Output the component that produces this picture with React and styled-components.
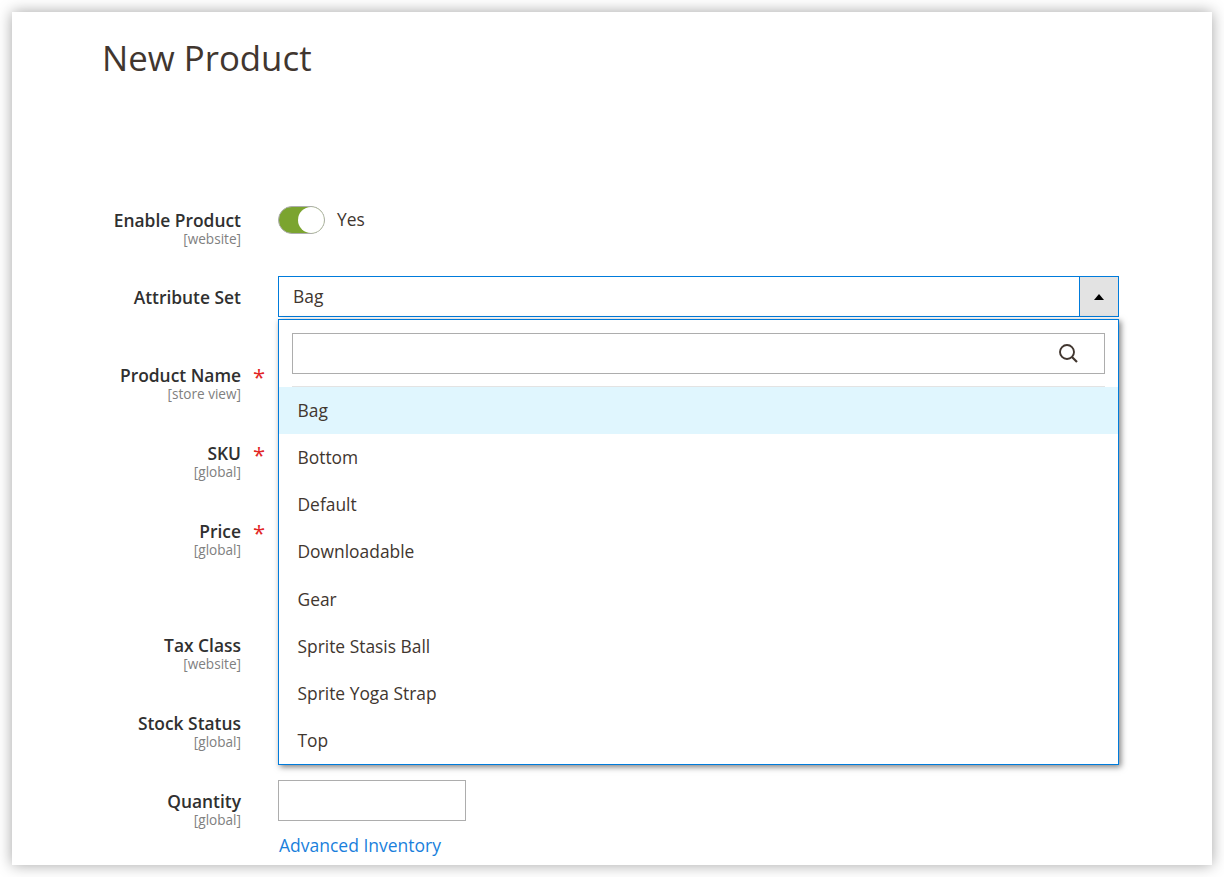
import React from 'react'
import styled, { createGlobalStyle } from 'styled-components'

const GlobalStyle = createGlobalStyle`
  html, body {
    margin: 0;
    padding: 0;
    background: #fff;
    font-family: 'Open Sans', 'Liberation Sans', sans-serif;
    color: #41362f;
  }
`

const Page = styled.div`
  width: 1224px;
  height: 877px;
  padding: 12px;
  box-sizing: border-box;
  overflow: hidden;
`

const Card = styled.div`
  height: 853px;
  background: #fff;
  box-shadow: 0 0 14px rgba(0, 0, 0, 0.36);
  padding: 0 91px;
  box-sizing: border-box;
  overflow: hidden;
`

const Title = styled.h1`
  margin: 0 0 0 -1px;
  padding-top: 22px;
  height: 180px;
  box-sizing: border-box;
  font-size: 34.8px;
  line-height: 48px;
  font-weight: 400;
  color: #41362f;
`

const Form = styled.div`
  position: relative;
  display: flex;
  flex-direction: column;
`

const Row = styled.div`
  display: grid;
  grid-template-columns: 138px 37px 1fr;
  height: ${props => props.height}px;
`

const LabelBox = styled.div`
  text-align: right;
  padding-top: ${props => props.top || 17}px;
`

const Label = styled.div`
  font-size: 17.4px;
  line-height: 21px;
  font-weight: 600;
  color: #303030;
`

const Scope = styled.div`
  font-size: 13.6px;
  line-height: 15px;
  color: #808080;
`

const Star = styled.div`
  font-size: 22px;
  line-height: 26px;
  color: #e22626;
  padding: 15px 0 0 12px;
`

const Control = styled.div`
  padding-top: ${props => props.top}px;
`

const SwitchRow = styled.div`
  display: flex;
  align-items: flex-start;
  gap: 12px;
`

const Switch = styled.div`
  width: 47px;
  height: 28px;
  box-sizing: border-box;
  border-radius: 14px;
  background: #7ba42f;
  border: 1px solid #adadad;
  display: flex;
  justify-content: flex-end;
`

const Knob = styled.div`
  width: 26px;
  height: 26px;
  border-radius: 50%;
  background: #fff;
`

const SwitchText = styled.span`
  font-size: 17.4px;
  line-height: 26px;
  color: #41362f;
`

const Select = styled.div`
  display: flex;
  height: 41px;
  box-sizing: border-box;
  width: 841px;
  border: 1px solid #007bdb;
`

const SelectValue = styled.div`
  flex: 1;
  padding-left: 14px;
  font-size: 17.4px;
  line-height: 39px;
  color: #41362f;
`

const SelectToggle = styled.div`
  width: 38px;
  border-left: 1px solid #007bdb;
  background: #e3e3e3;
  display: flex;
  align-items: center;
  justify-content: center;
`

const Caret = styled.div`
  width: 0;
  height: 0;
  border-left: 5px solid transparent;
  border-right: 5px solid transparent;
  border-bottom: 6px solid #000;
`

const Input = styled.div`
  width: 188px;
  height: 41px;
  box-sizing: border-box;
  border: 1px solid #adadad;
  background: #fff;
`

const LinkText = styled.a`
  display: block;
  margin-top: 12px;
  padding-left: 1px;
  font-size: 17.5px;
  line-height: 24px;
  color: #1a7fdc;
  text-decoration: none;
`

const Dropdown = styled.div`
  position: absolute;
  left: 175px;
  top: 127px;
  width: 841px;
  height: 446px;
  box-sizing: border-box;
  background: #fff;
  border: 1px solid #007bdb;
  box-shadow: 2px 2px 6px rgba(0, 0, 0, 0.5);
`

const SearchWrap = styled.div`
  margin: 13px 13px 0 13px;
  padding-bottom: 12px;
  border-bottom: 1px solid #e3e3e3;
`

const SearchBox = styled.div`
  height: 41px;
  box-sizing: border-box;
  border: 1px solid #adadad;
  display: flex;
  align-items: center;
  justify-content: flex-end;
  padding-right: 26px;
  color: #41362f;
`

const Options = styled.div`
  display: flex;
  flex-direction: column;
`

const Option = styled.div`
  height: ${props => (props.selected ? 47 : 47.2)}px;
  padding-left: 18.5px;
  font-size: 17.4px;
  line-height: 46px;
  color: #41362f;
  background: ${props => (props.selected ? '#e0f6fe' : 'transparent')};
`

const SearchIcon = () => (
  <svg width="19" height="19" viewBox="0 0 19 19" fill="none" stroke="currentColor">
    <circle cx="8" cy="8" r="7" strokeWidth="1.9" />
    <path d="M13 13l5 5" strokeWidth="2.2" />
  </svg>
)

const attributeSets = [
  'Bag',
  'Bottom',
  'Default',
  'Downloadable',
  'Gear',
  'Sprite Stasis Ball',
  'Sprite Yoga Strap',
  'Top',
]

const fields = [
  { label: 'Product Name', scope: '[store view]', required: true, height: 78 },
  { label: 'SKU', scope: '[global]', required: true, height: 78 },
  { label: 'Price', scope: '[global]', required: true, height: 114 },
  { label: 'Tax Class', scope: '[website]', height: 78 },
  { label: 'Stock Status', scope: '[global]', height: 78 },
]

const App = () => (
  <Page>
    <GlobalStyle />
    <Card>
      <Title>New Product</Title>
      <Form>
        <Row height={78}>
          <LabelBox top={18}>
            <Label>Enable Product</Label>
            <Scope>[website]</Scope>
          </LabelBox>
          <span />
          <Control top={14}>
            <SwitchRow>
              <Switch>
                <Knob />
              </Switch>
              <SwitchText>Yes</SwitchText>
            </SwitchRow>
          </Control>
        </Row>
        <Row height={78}>
          <LabelBox>
            <Label>Attribute Set</Label>
          </LabelBox>
          <span />
          <Control top={6}>
            <Select>
              <SelectValue>Bag</SelectValue>
              <SelectToggle>
                <Caret />
              </SelectToggle>
            </Select>
          </Control>
        </Row>
        {fields.map(field => (
          <Row key={field.label} height={field.height}>
            <LabelBox>
              <Label>{field.label}</Label>
              <Scope>{field.scope}</Scope>
            </LabelBox>
            {field.required ? <Star>*</Star> : <span />}
            <Control top={6}>
              <Input />
            </Control>
          </Row>
        ))}
        <Row height={90}>
          <LabelBox>
            <Label>Quantity</Label>
            <Scope>[global]</Scope>
          </LabelBox>
          <span />
          <Control top={6}>
            <Input />
            <LinkText href="#">Advanced Inventory</LinkText>
          </Control>
        </Row>
        <Dropdown>
          <SearchWrap>
            <SearchBox>
              <SearchIcon />
            </SearchBox>
          </SearchWrap>
          <Options>
            {attributeSets.map((name, i) => (
              <Option key={name} selected={i === 0}>
                {name}
              </Option>
            ))}
          </Options>
        </Dropdown>
      </Form>
    </Card>
  </Page>
)

export default App
